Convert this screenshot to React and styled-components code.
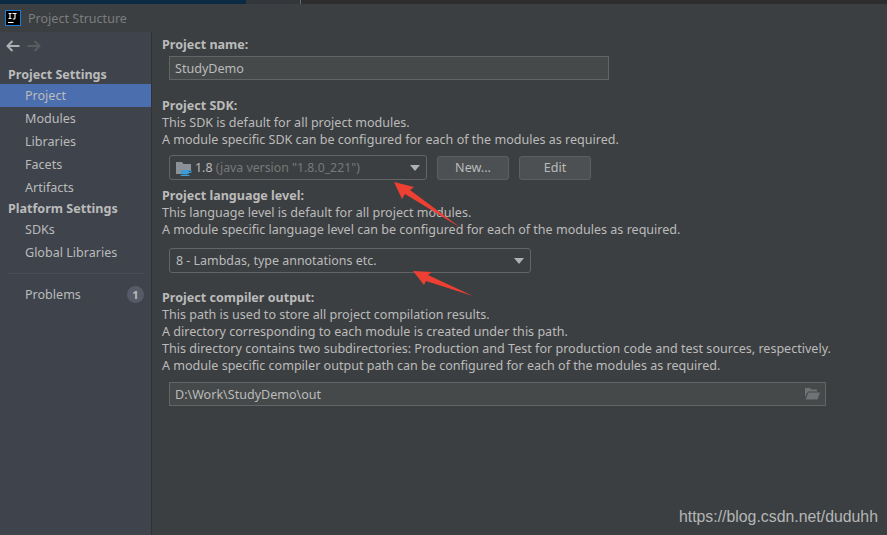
import React from 'react';
import styled, { createGlobalStyle } from 'styled-components';

const Global = createGlobalStyle`
  html, body { margin: 0; padding: 0; background: #3c3f41; }
  body { font-family: "Noto Sans", "Open Sans", sans-serif; font-size: 12.55px; color: #bbbbbb; }
  * { box-sizing: border-box; }
`;
const Page = styled.div`position: relative; width: 887px; height: 535px; overflow: hidden; background: #3c3f41; display: flex; flex-direction: column;`;
const TopStrip = styled.div`height: 4px; background: #2d2d2d; display: flex; flex: none;`;
const TopBlue = styled.div`width: 246px; background: #0c2a43;`;
const TopTab = styled.div`width: 55px; background: #33373b; border-right: 1px solid #6a6a6a;`;
const TitleBar = styled.div`height: 28px; flex: none; display: flex; align-items: center; gap: 7px; padding-left: 5px; background: #3c3f41; color: #7a7d7f;`;
const Body = styled.div`flex: 1; display: flex; min-height: 0;`;
const Sidebar = styled.div`width: 152px; flex: none; background: #3e434c; border-right: 1px solid #323232; display: flex; flex-direction: column;`;
const Nav = styled.div`height: 33px; flex: none; display: flex; align-items: center; gap: 7px; padding: 0 0 6px 6px;`;
const Heading = styled.div`height: 19px; flex: none; padding-left: 8px; font-weight: 700; line-height: 19px; color: #bbbbbb; white-space: nowrap;`;
const Item = styled.div`height: 23px; flex: none; padding-left: 25px; display: flex; justify-content: space-between; align-items: center;
  background: ${p => (p.$active ? '#4b6eaf' : 'transparent')};`;
const Divider = styled.div`height: 1px; flex: none; margin: 9px 8px 9px 7px; background: #494d55;`;
const Badge = styled.span`width: 17px; height: 17px; border-radius: 50%; background: #575b68; color: #bbb; margin-right: 7px; font-size: 11px; font-weight: 700; display: flex; align-items: center; justify-content: center;`;
const Main = styled.div`flex: 1; padding: 4px 0 0 10px; display: flex; flex-direction: column;`;
const Label = styled.div`font-weight: 700; line-height: 17px; height: 17px; white-space: nowrap;`;
const Text = styled.div`line-height: 17px; height: 17px; white-space: nowrap;`;
const Section = styled.div`display: flex; flex-direction: column; flex: none; margin-top: ${p => p.$top}px;`;
const Field = styled.div`margin: ${p => p.$top}px 0 0 7px; width: ${p => p.$w}px; height: 24px; flex: none; background: #45494a; border: 1px solid #646464; padding: 0 5px; display: flex; align-items: center; justify-content: space-between;`;
const Row = styled.div`display: flex; flex: none; align-items: center; margin: ${p => p.$top}px 0 0 7px; gap: 10px;`;
const Combo = styled.div`width: ${p => p.$w}px; height: 25px; border: 1px solid #646464; border-radius: 3px; background: #3c3f41; padding: 0 6px; display: flex; align-items: center; gap: 3px;`;
const ComboText = styled.span`flex: 1; white-space: nowrap; font-size: 12.45px;`;
const Muted = styled.span`color: #787878; font-size: 12.3px;`;
const Caret = styled.span`width: 0; height: 0; border-left: 5px solid transparent; border-right: 5px solid transparent; border-top: 6px solid #aeb0b2;`;
const Button = styled.div`width: 72px; height: 24px; border: 1px solid #5e6060; border-radius: 3px; background: #4c5052; display: flex; align-items: center; justify-content: center;`;
const Overlay = styled.svg`position: absolute; left: 0; top: 0; pointer-events: none;`;
const Watermark = styled.div`position: absolute; right: 9px; top: 507px; font-family: "Liberation Sans", sans-serif; font-size: 15.85px; color: #b4b6b7; line-height: 20px;`;

const IJ = () => (
  <svg width="16" height="16" viewBox="0 0 16 16">
    <rect x="0.5" y="0.5" width="15" height="15" fill="#000" stroke="#1a7fe0" />
    <path d="M3.5 3.5h3M5 3.5v5M3.5 8.5h3M7.5 3.5h4M10 3.5v4.5q0 1-1 1H7.8M3 12.5h5.5" stroke="#fff" strokeWidth="1.1" fill="none" />
  </svg>
);
const Back = ({ c }) => (
  <svg width="14" height="12" viewBox="0 0 14 12"><path d="M13.5 6H2M6.5 1 1.5 6l5 5" fill="none" stroke={c} strokeWidth="2" /></svg>
);
const Fwd = ({ c }) => (
  <svg width="14" height="12" viewBox="0 0 14 12"><path d="M.5 6H12M7.5 1l5 5-5 5" fill="none" stroke={c} strokeWidth="2" /></svg>
);
const SdkIcon = () => (
  <svg width="16" height="16" viewBox="0 0 16 16">
    <path d="M0 2h6l1.5 2H15v7H6v3H0z" fill="#8c9198" />
    <path d="M5 10h8v2.5a2 2 0 0 1-2 2H7a2 2 0 0 1-2-2z" fill="#3c9dd6" />
    <path d="M13 10.5h2v2h-2M4.5 15.5h9" stroke="#3c9dd6" fill="none" />
  </svg>
);
const FolderOpen = () => (
  <svg width="15" height="12" viewBox="0 0 15 12">
    <path d="M0 0h5l1 1.5h6V3.5H3L0 9z" fill="#6f7375" />
    <path d="M3.5 4.5H15l-2.5 7H.5z" fill="#6f7375" />
  </svg>
);

export default function App() {
  return (
    <Page>
      <Global />
      <TopStrip><TopBlue /><TopTab /></TopStrip>
      <TitleBar><IJ /><span>Project Structure</span></TitleBar>
      <Body>
        <Sidebar>
          <Nav><Back c="#afb1b3" /><Fwd c="#5a5d5f" /></Nav>
          <Heading>Project Settings</Heading>
          <Item $active>Project</Item>
          <Item>Modules</Item>
          <Item>Libraries</Item>
          <Item>Facets</Item>
          <Item>Artifacts</Item>
          <Heading>Platform Settings</Heading>
          <Item>SDKs</Item>
          <Item>Global Libraries</Item>
          <Divider />
          <Item>Problems<Badge>1</Badge></Item>
        </Sidebar>
        <Main>
          <Label>Project name:</Label>
          <Field $w={440} $top={3}>StudyDemo</Field>
          <Section $top={17}>
            <Label>Project SDK:</Label>
            <Text>This SDK is default for all project modules.</Text>
            <Text>A module specific SDK can be configured for each of the modules as required.</Text>
          </Section>
          <Row $top={7}>
            <Combo $w={258}><SdkIcon /><ComboText>1.8 <Muted>(java version "1.8.0_221")</Muted></ComboText><Caret /></Combo>
            <Button>New...</Button>
            <Button>Edit</Button>
          </Row>
          <Section $top={7}>
            <Label>Project language level:</Label>
            <Text>This language level is default for all project modules.</Text>
            <Text>A module specific language level can be configured for each of the modules as required.</Text>
          </Section>
          <Row $top={10}><Combo $w={362}><ComboText>8 - Lambdas, type annotations etc.</ComboText><Caret /></Combo></Row>
          <Section $top={16}>
            <Label>Project compiler output:</Label>
            <Text>This path is used to store all project compilation results.</Text>
            <Text>A directory corresponding to each module is created under this path.</Text>
            <Text>This directory contains two subdirectories: Production and Test for production code and test sources, respectively.</Text>
            <Text>A module specific compiler output path can be configured for each of the modules as required.</Text>
          </Section>
          <Field $w={657} $top={8}>D:\Work\StudyDemo\out<FolderOpen /></Field>
        </Main>
      </Body>
      <Overlay width="887" height="535" viewBox="0 0 887 535">
        <path d="M394 182 L414 187 L410 190 L461 228 L405 194 L402 199 Z" fill="#ee3f33" />
        <path d="M413 271 L432 272 L428 275 L473 296 L426 281 L424 285 Z" fill="#ee3f33" />
      </Overlay>
      <Watermark>https://blog.csdn.net/duduhh</Watermark>
    </Page>
  );
}
